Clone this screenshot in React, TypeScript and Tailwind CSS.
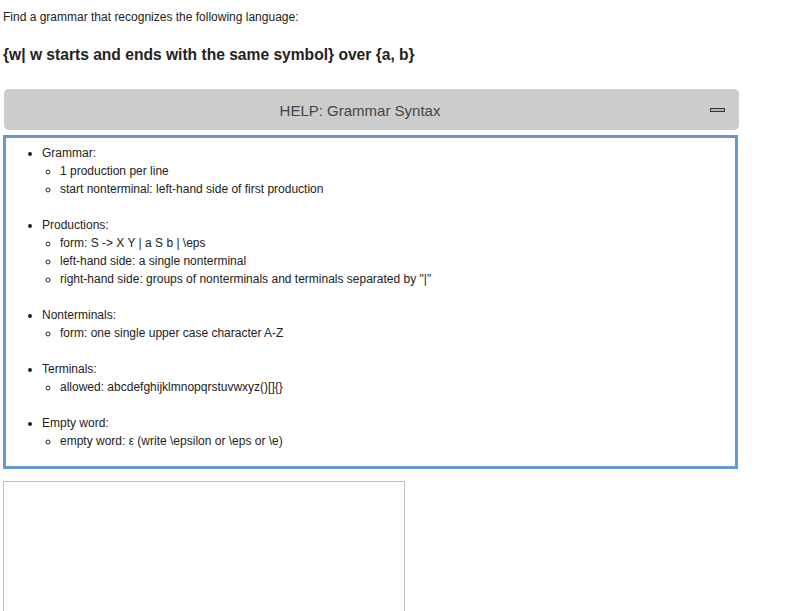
const sections = [
  { title: 'Grammar:', items: ['1 production per line', 'start nonterminal: left-hand side of first production'] },
  {
    title: 'Productions:',
    items: [
      'form: S -> X Y | a S b | \\eps',
      'left-hand side: a single nonterminal',
      'right-hand side: groups of nonterminals and terminals separated by "|"',
    ],
  },
  { title: 'Nonterminals:', items: ['form: one single upper case character A-Z'] },
  { title: 'Terminals:', items: ['allowed: abcdefghijklmnopqrstuvwxyz()[]{}'] },
  { title: 'Empty word:', items: ['empty word: ε (write \\epsilon or \\eps or \\e)'] },
];

export default function App() {
  return (
    <div className="min-h-[611px] bg-white font-['Liberation_Sans',Arial,sans-serif] text-[#222]">
      <p className="px-[3px] pt-[9px] text-[12px] leading-[16px]">Find a grammar that recognizes the following language:</p>
      <h3 className="mt-[20px] px-[3px] text-[15.6px] font-bold leading-[20px]">
        {'{w| w starts and ends with the same symbol} over {a, b}'}
      </h3>

      <div className="mt-[24px] w-[736px] pl-[3px]">
        <div className="ml-[1px] flex h-[41px] w-[735px] items-center rounded-[5px] bg-[#cccccc]">
          <div className="flex-1 pl-[6px] pt-[3px] text-center text-[15px] text-[#454545]">HELP: Grammar Syntax</div>
          <div className="mr-[14px] mt-[1px] h-[4px] w-[15px] border border-[#333] bg-[#b5b5b5]" />
        </div>

        <div className="mt-[5px] w-[735px] border-[3px] border-[#6699cc] pt-[6px] text-[12px] leading-[18px]">
          <ul className="list-disc pl-[36px]">
            {sections.map((section) => (
              <li key={section.title} className="mb-[18px] last:mb-[16px]">
                {section.title}
                <ul className="list-[circle] pl-[18px]">
                  {section.items.map((item) => (
                    <li key={item}>{item}</li>
                  ))}
                </ul>
              </li>
            ))}
          </ul>
        </div>

        <textarea className="mt-[12px] block h-[150px] w-[402px] resize-none border border-[#bbb] outline-none" />
      </div>
    </div>
  );
}
